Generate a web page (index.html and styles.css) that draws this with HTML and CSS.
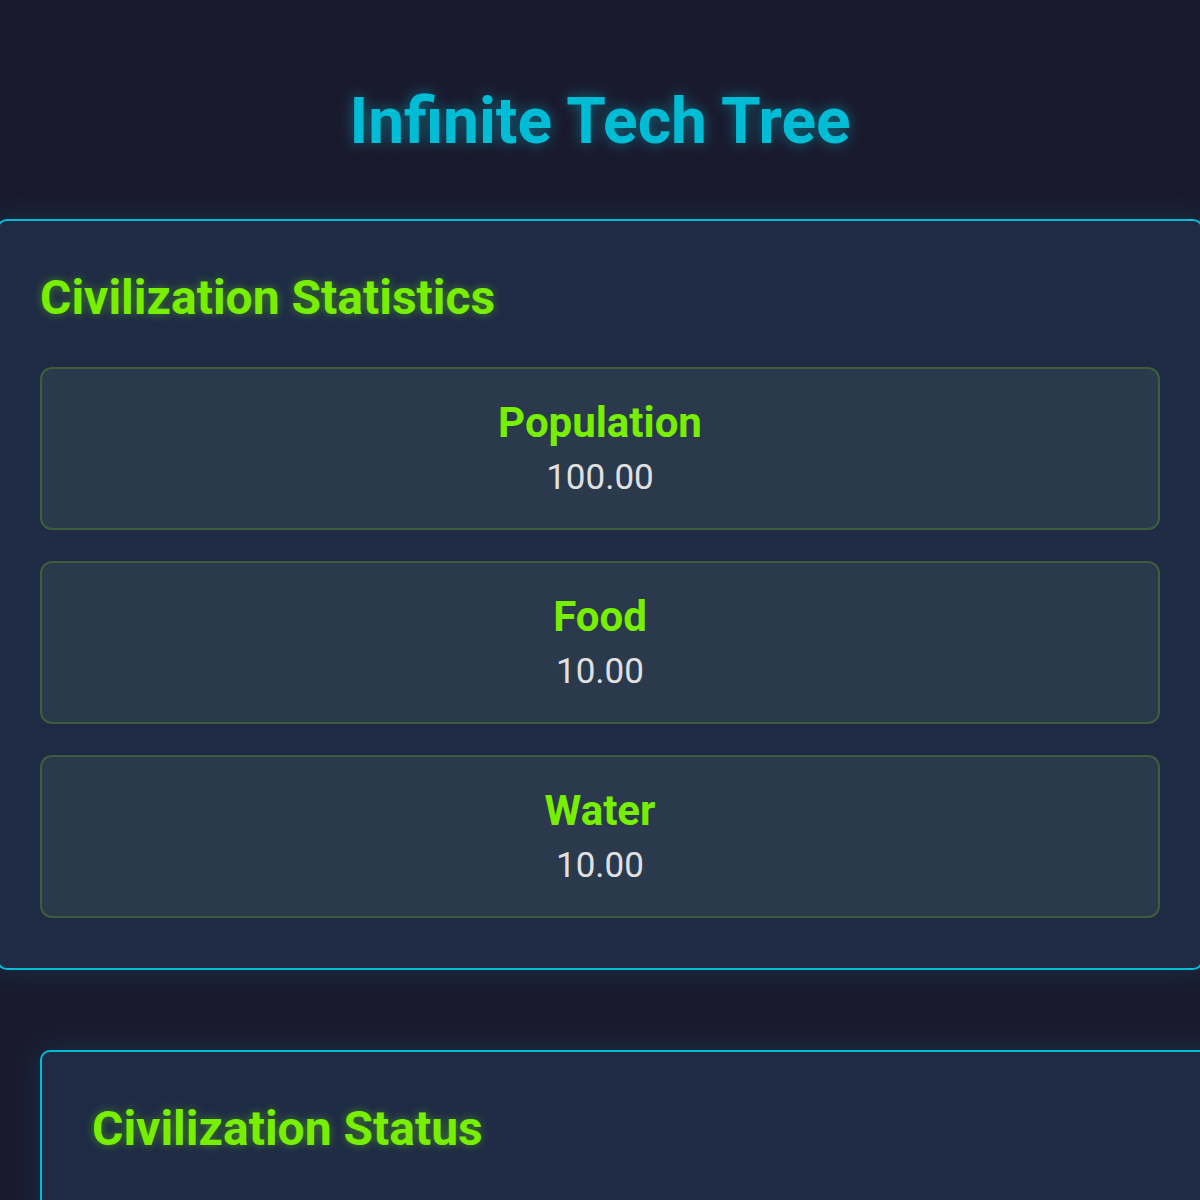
FILE: index.html
```html
<!DOCTYPE html>
<html lang="en">
<head>
  <meta charset="UTF-8">
  <meta name="viewport" content="width=device-width, initial-scale=1.0">
  <title>Infinite Tech Tree</title>
  <link rel="stylesheet" href="styles.css">
</head>
<body>
  <h1>Infinite Tech Tree</h1>

  <div class="panel" id="stats">
    <h2>Civilization Statistics</h2>
    <div class="stat">
      <div class="stat-label">Population</div>
      <div class="stat-value" id="population">100.00</div>
    </div>
    <div class="stat">
      <div class="stat-label">Food</div>
      <div class="stat-value" id="food">10.00</div>
    </div>
    <div class="stat">
      <div class="stat-label">Water</div>
      <div class="stat-value" id="water">10.00</div>
    </div>
  </div>

  <div class="panel status-panel" id="status">
    <h2>Civilization Status</h2>
  </div>
</body>
</html>
```

FILE: styles.css
```css
body {
  font-family: Roboto, 'Liberation Sans', sans-serif;
  background: #1a1a2e;
  color: #e0e0e0;
  margin: 0;
  padding: 0;
  overflow-x: hidden;
}

h1 {
  color: #00bcd4;
  font-size: 64px;
  font-weight: 700;
  text-align: center;
  margin: 0;
  padding: 90px 0 65px;
  line-height: 1;
  text-shadow: 0 0 14px rgba(0, 188, 212, 0.5);
}

.panel {
  background: #1f2b45;
  border: 2px solid #00bcd4;
  border-radius: 10px;
  padding: 40px 41px 50px;
  margin: 0 -3px;
  box-shadow: 0 0 30px rgba(0, 188, 212, 0.15);
}

h2 {
  color: #78ee00;
  font-size: 48px;
  font-weight: 700;
  line-height: 1;
  margin: 0 0 45px;
  padding-top: 13px;
  text-shadow: 0 0 10px rgba(118, 255, 3, 0.4);
}

.stat {
  background: #2a3a4c;
  border: 2px solid #3e5d3c;
  border-radius: 12px;
  height: 163px;
  box-sizing: border-box;
  display: flex;
  flex-direction: column;
  align-items: center;
  justify-content: center;
  gap: 13px;
  margin-bottom: 31px;
}

.stat:last-child {
  margin-bottom: 0;
}

.stat-label {
  color: #78ee00;
  font-size: 42px;
  font-weight: 700;
  line-height: 1.1;
}

.stat-value {
  color: #e0e0e0;
  font-size: 35px;
  line-height: 1.1;
}

.status-panel {
  margin: 80px -40px 0 40px;
  padding: 53px 50px 300px;
}

.status-panel h2 {
  padding-top: 0;
}
```
